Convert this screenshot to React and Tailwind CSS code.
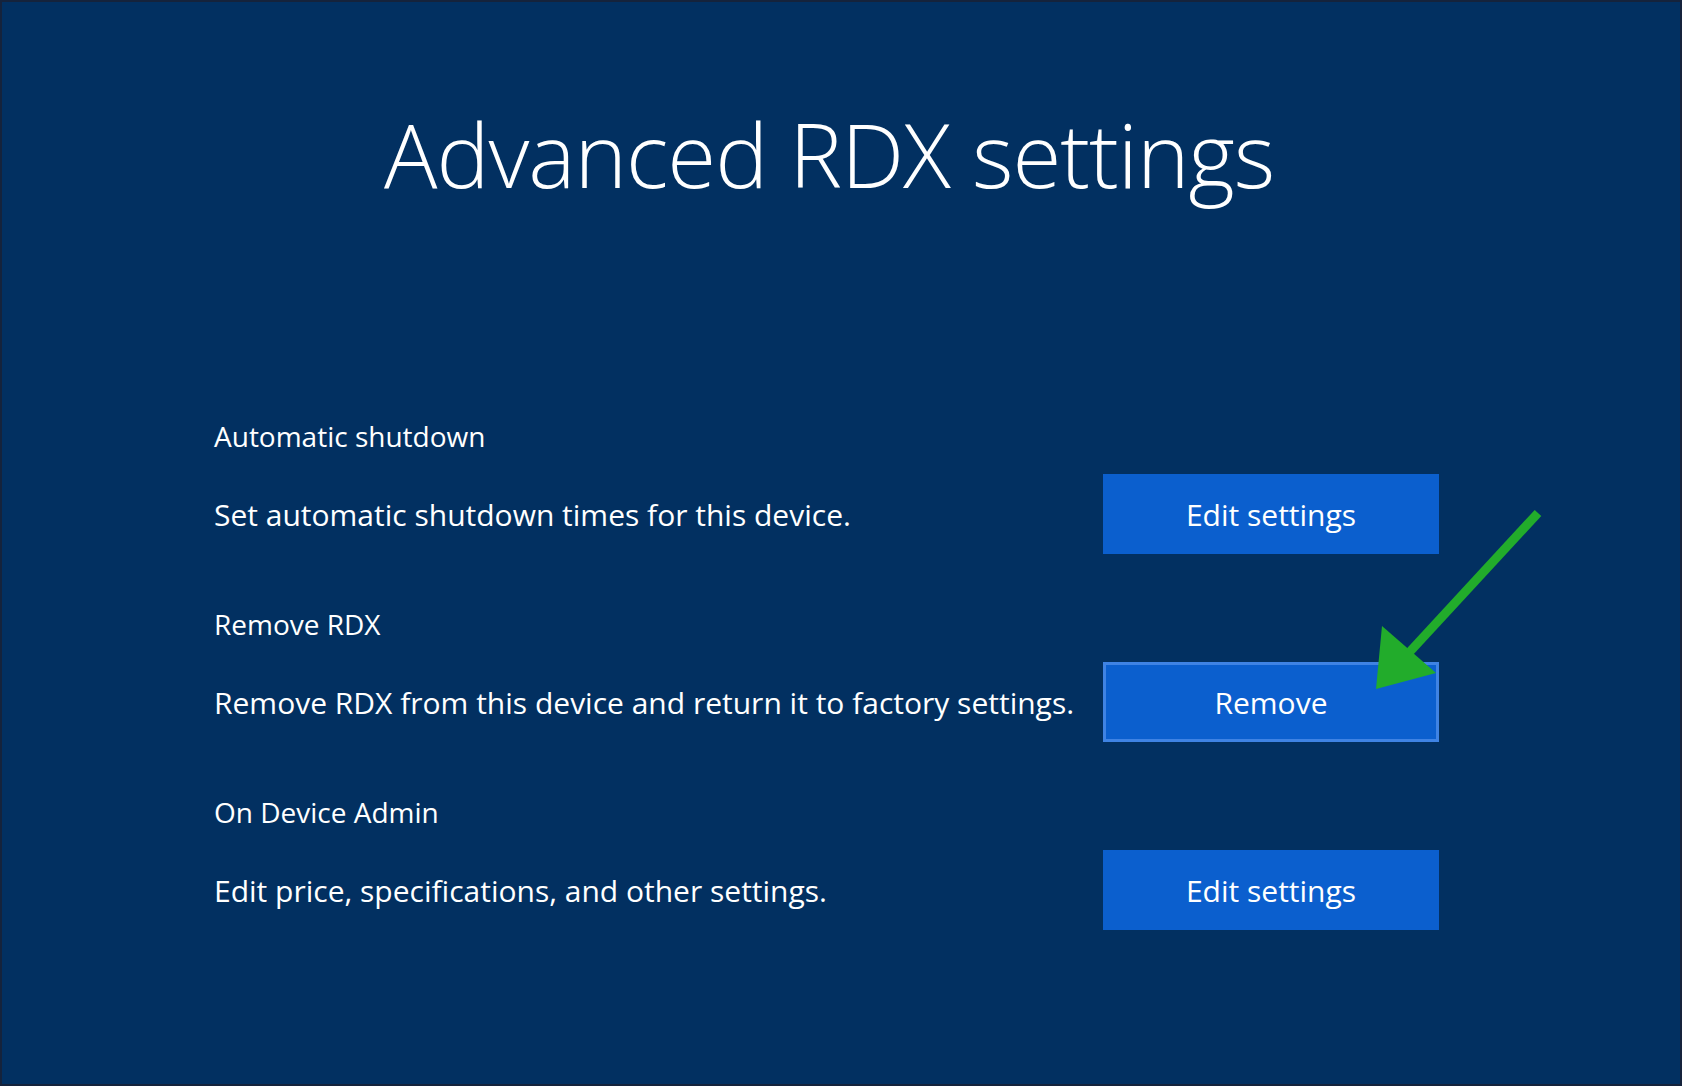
export default function App() {
  const sections = [
    {
      title: "Automatic shutdown",
      text: "Set automatic shutdown times for this device.",
      action: "Edit settings",
    },
    {
      title: "Remove RDX",
      text: "Remove RDX from this device and return it to factory settings.",
      action: "Remove",
      focused: true,
    },
    {
      title: "On Device Admin",
      text: "Edit price, specifications, and other settings.",
      action: "Edit settings",
    },
  ];

  return (
    <div className="relative h-[1086px] w-[1682px] overflow-hidden border-2 border-[#15233c] bg-[#023061] font-['Open_Sans',sans-serif] text-white">
      {/* page title */}
      <h1 className="pl-[382px] pt-[107px] text-[89px] font-light leading-[90px] tracking-[-1px]">
        Advanced RDX settings
      </h1>

      {/* option rows */}
      <div className="ml-[212px] mt-[217px] flex w-[1225px] flex-col gap-[50px]">
        {sections.map((s) => (
          <div key={s.title} className="flex flex-col gap-[18px]">
            <div className="h-[40px] text-[28px] leading-[40px]">{s.title}</div>
            <div className="flex h-[80px] items-center justify-between">
              <span className="text-[30px]">{s.text}</span>
              <button
                className={
                  s.focused
                    ? "flex h-[80px] w-[336px] items-center justify-center border-[3px] border-[#3f83e4] bg-[#0b5fce] text-[30px]"
                    : "flex h-[80px] w-[336px] items-center justify-center bg-[#0b5fce] text-[30px]"
                }
              >
                {s.action}
              </button>
            </div>
          </div>
        ))}
      </div>

      {/* green pointer arrow */}
      <svg
        className="pointer-events-none absolute left-0 top-0"
        width="1682"
        height="1086"
        viewBox="2 2 1682 1086"
      >
        <line x1="1538" y1="513" x2="1405" y2="657" stroke="#22ac2b" strokeWidth="9" />
        <polygon points="1376,689 1382,626 1436,673" fill="#22ac2b" />
      </svg>
    </div>
  );
}
